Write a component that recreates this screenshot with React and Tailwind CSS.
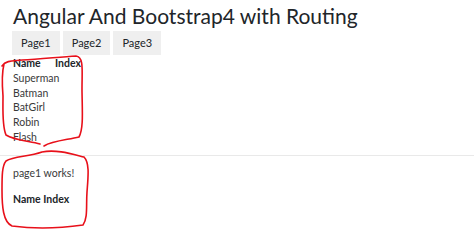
const heroes = ["Superman", "Batman", "BatGirl", "Robin", "Flash"];

const Scribbles = () => (
  <svg className="absolute left-0 top-0 pointer-events-none" width="474" height="229" viewBox="0 0 474 229" fill="none">
    <path
      d="M2 66 C6 60 14 61 22 60 C40 59 60 57 76 56 C84 57 82 70 82 88 C82 108 84 128 79 137 C66 140 52 141 44 146 M40 144 C28 141 14 140 6 135 C2 126 3 110 3 96 C2 84 2 72 4 64"
      stroke="#e8101a"
      strokeWidth="1.6"
      strokeLinecap="round"
    />
    <path
      d="M6 161 C14 156 28 157 42 152 C56 149 72 154 84 157 C90 163 88 178 87 192 C86 206 88 218 83 225 C62 228 34 229 12 226 C3 222 2 206 2 190 C2 176 2 166 6 161 Z"
      stroke="#e8101a"
      strokeWidth="1.6"
      strokeLinecap="round"
    />
  </svg>
);

const App = () => {
  return (
    <div className="relative w-[474px] h-[229px] overflow-hidden bg-white text-[#212529] font-['Lato','Open_Sans',sans-serif]">
      <div className="pl-[13px]">
        <h1 className="text-[21px] leading-[30px] pt-[1px] font-normal">Angular And Bootstrap4 with Routing</h1>

        <div className="flex gap-[3px] h-[24px] -ml-[1px]">
          <button className="bg-[#efefef] px-[9px] text-[11px] text-[#212529]">Page1</button>
          <button className="bg-[#efefef] px-[9px] text-[11px] text-[#212529]">Page2</button>
          <button className="bg-[#efefef] px-[9px] text-[11px] text-[#212529]">Page3</button>
        </div>

        <div className="text-[10.5px] leading-[14.75px] mt-[1px]">
          <div className="flex font-bold">
            <span className="w-[42px]">Name</span>
            <span>Index</span>
          </div>
          {heroes.map((h) => (
            <div key={h} className="text-[#3a3a3a]">{h}</div>
          ))}
        </div>
      </div>

      <hr className="border-t border-[#e9e9e9] mt-[10px]" />

      <div className="pl-[13px] text-[10.5px]">
        <p className="text-[#3a3a3a] mt-[10px] leading-[14px]">page1 works!</p>
        <div className="font-bold mt-[12px] leading-[14px]">Name Index</div>
      </div>

      <Scribbles />
    </div>
  );
};

export default App;
